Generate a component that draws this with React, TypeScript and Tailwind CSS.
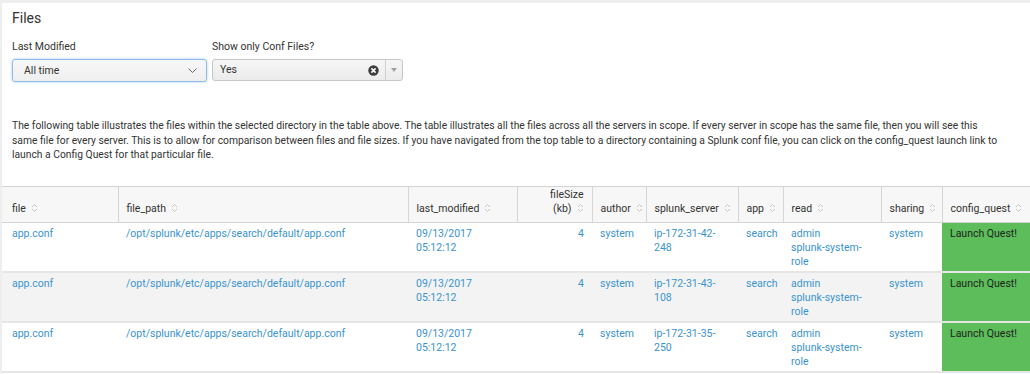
import React from 'react'

interface Row {
  file: string
  path: string
  date: string
  time: string
  size: string
  author: string
  server: string[]
  app: string
  read: string[]
  sharing: string
}

const rows: Row[] = [
  { file: 'app.conf', path: '/opt/splunk/etc/apps/search/default/app.conf', date: '09/13/2017', time: '05:12:12', size: '4', author: 'system', server: ['ip-172-31-42-', '248'], app: 'search', read: ['admin', 'splunk-system-', 'role'], sharing: 'system' },
  { file: 'app.conf', path: '/opt/splunk/etc/apps/search/default/app.conf', date: '09/13/2017', time: '05:12:12', size: '4', author: 'system', server: ['ip-172-31-43-', '108'], app: 'search', read: ['admin', 'splunk-system-', 'role'], sharing: 'system' },
  { file: 'app.conf', path: '/opt/splunk/etc/apps/search/default/app.conf', date: '09/13/2017', time: '05:12:12', size: '4', author: 'system', server: ['ip-172-31-35-', '250'], app: 'search', read: ['admin', 'splunk-system-', 'role'], sharing: 'system' },
]

const SortIcon = () => (
  <svg width="7" height="10" viewBox="0 0 7 10" className="inline-block ml-[5px] align-[-1px]">
    <path d="M1 4 L3.5 1.5 L6 4 M1 6 L3.5 8.5 L6 6" fill="none" stroke="#c4c4c4" strokeWidth="1" />
  </svg>
)

const cols: { key: string; label: React.ReactNode; width: string; right?: boolean }[] = [
  { key: 'file', label: 'file', width: 'w-[116px]' },
  { key: 'path', label: 'file_path', width: 'w-[290px]' },
  { key: 'mod', label: 'last_modified', width: 'w-[109px]' },
  { key: 'size', label: <>fileSize<br />(kb)</>, width: 'w-[75px]', right: true },
  { key: 'author', label: 'author', width: 'w-[54px]' },
  { key: 'server', label: 'splunk_server', width: 'w-[92px]' },
  { key: 'app', label: 'app', width: 'w-[45px]' },
  { key: 'read', label: 'read', width: 'w-[98px]' },
  { key: 'sharing', label: 'sharing', width: 'w-[61px]' },
  { key: 'quest', label: 'config_quest', width: 'w-[88px]' },
]

const link = 'text-[#3a93d0]'
const cell = 'px-[8px] pt-[4px] pb-[2px]'

export default function App() {
  return (
    <div className="w-[1030px] h-[374px] bg-[#eeeeee] pt-[3px] pl-[2px] overflow-hidden text-[#333] [font-family:Roboto,'Liberation_Sans',sans-serif]">
      <div className="bg-white h-full">
        {/* Header + inputs */}
        <div className="pl-[10px] pt-[5px]">
          <h2 className="text-[14px] leading-[20px] font-normal">Files</h2>
          <div className="flex gap-[5px] mt-[12px]">
            <div className="w-[195px]">
              <div className="text-[10.5px] leading-[14px] mb-[5px]">Last Modified</div>
              <div className="h-[23px] rounded-[3px] border border-[#8fbbe8] shadow-[0_0_3px_#a9cdf2] bg-gradient-to-b from-[#f8f8f8] to-[#eeeeee] flex items-center justify-between pl-[11px] pr-[9px] text-[10.5px]">
                <span>All time</span>
                <svg width="9" height="5" viewBox="0 0 9 5">
                  <path d="M0.5 0.5 L4.5 4.5 L8.5 0.5" fill="none" stroke="#666" strokeWidth="1" />
                </svg>
              </div>
            </div>
            <div className="w-[191px]">
              <div className="text-[10.5px] leading-[14px] mb-[5px]">Show only Conf Files?</div>
              <div className="h-[22px] rounded-[3px] border border-[#c6c6c6] bg-gradient-to-b from-[#f6f6f6] to-[#ececec] flex items-center text-[10.5px]">
                <span className="pl-[7px] flex-1">Yes</span>
                <svg width="11" height="11" viewBox="0 0 11 11" className="mr-[6px]">
                  <circle cx="5.5" cy="5.5" r="5.2" fill="#3d3d3d" />
                  <path d="M3.4 3.4 L7.6 7.6 M7.6 3.4 L3.4 7.6" stroke="#fff" strokeWidth="1.5" />
                </svg>
                <div className="w-[17px] h-full border-l border-[#d0d0d0] flex items-center justify-center">
                  <svg width="6" height="4" viewBox="0 0 6 4">
                    <path d="M0 0 L6 0 L3 4 Z" fill="#a0a0a0" />
                  </svg>
                </div>
              </div>
            </div>
          </div>
        </div>

        <p className="pl-[10px] mt-[37px] text-[10.3px] leading-[14.5px] w-[1000px]">
          The following table illustrates the files within the selected directory in the table above. The table illustrates all the files across all the servers in scope. If every server in scope has the same file, then you will see this same file for every server. This is to allow for comparison between files and file sizes. If you have navigated from the top table to a directory containing a Splunk conf file, you can click on the config_quest launch link to launch a Config Quest for that particular file.
        </p>

        <table className="table-fixed w-[1028px] mt-[23px] border-collapse text-[10.5px] leading-[14px]">
          <thead>
            <tr className="h-[36px] bg-[#f7f7f7] border-y border-[#d3d3d3]">
              {cols.map((c, i) => (
                <th
                  key={c.key}
                  className={`${c.width} font-normal align-bottom pb-[6px] px-[8px] ${i === 0 ? 'pl-[10px]' : ''} ${c.right ? 'text-right' : 'text-left'} ${i < cols.length - 1 ? 'border-r border-[#d6d6d6]' : ''} text-[#333] whitespace-nowrap`}
                >
                  {c.label}
                  <SortIcon />
                </th>
              ))}
            </tr>
          </thead>
          <tbody>
            {rows.map((r, i) => (
              <tr key={i} className={`${i % 2 === 1 ? 'bg-[#f3f3f3]' : 'bg-white'} border-b-2 border-[#e6e6e6] align-top`}>
                <td className={`${cell} pl-[10px] ${link}`}>{r.file}</td>
                <td className={`${cell} ${link}`}>{r.path}</td>
                <td className={`${cell} ${link}`}>
                  {r.date}
                  <br />
                  {r.time}
                </td>
                <td className={`${cell} text-right ${link}`}>{r.size}</td>
                <td className={`${cell} ${link}`}>{r.author}</td>
                <td className={`${cell} ${link}`}>
                  {r.server.map((s, k) => (
                    <div key={k}>{s}</div>
                  ))}
                </td>
                <td className={`${cell} ${link}`}>{r.app}</td>
                <td className={`${cell} ${link}`}>
                  {r.read.map((s, k) => (
                    <div key={k}>{s}</div>
                  ))}
                </td>
                <td className={`${cell} ${link}`}>{r.sharing}</td>
                <td className={`${cell} px-[7px] bg-[#5cbd5a] text-[#1f1f1f] whitespace-nowrap`}>Launch Quest!</td>
              </tr>
            ))}
          </tbody>
        </table>
      </div>
    </div>
  )
}
